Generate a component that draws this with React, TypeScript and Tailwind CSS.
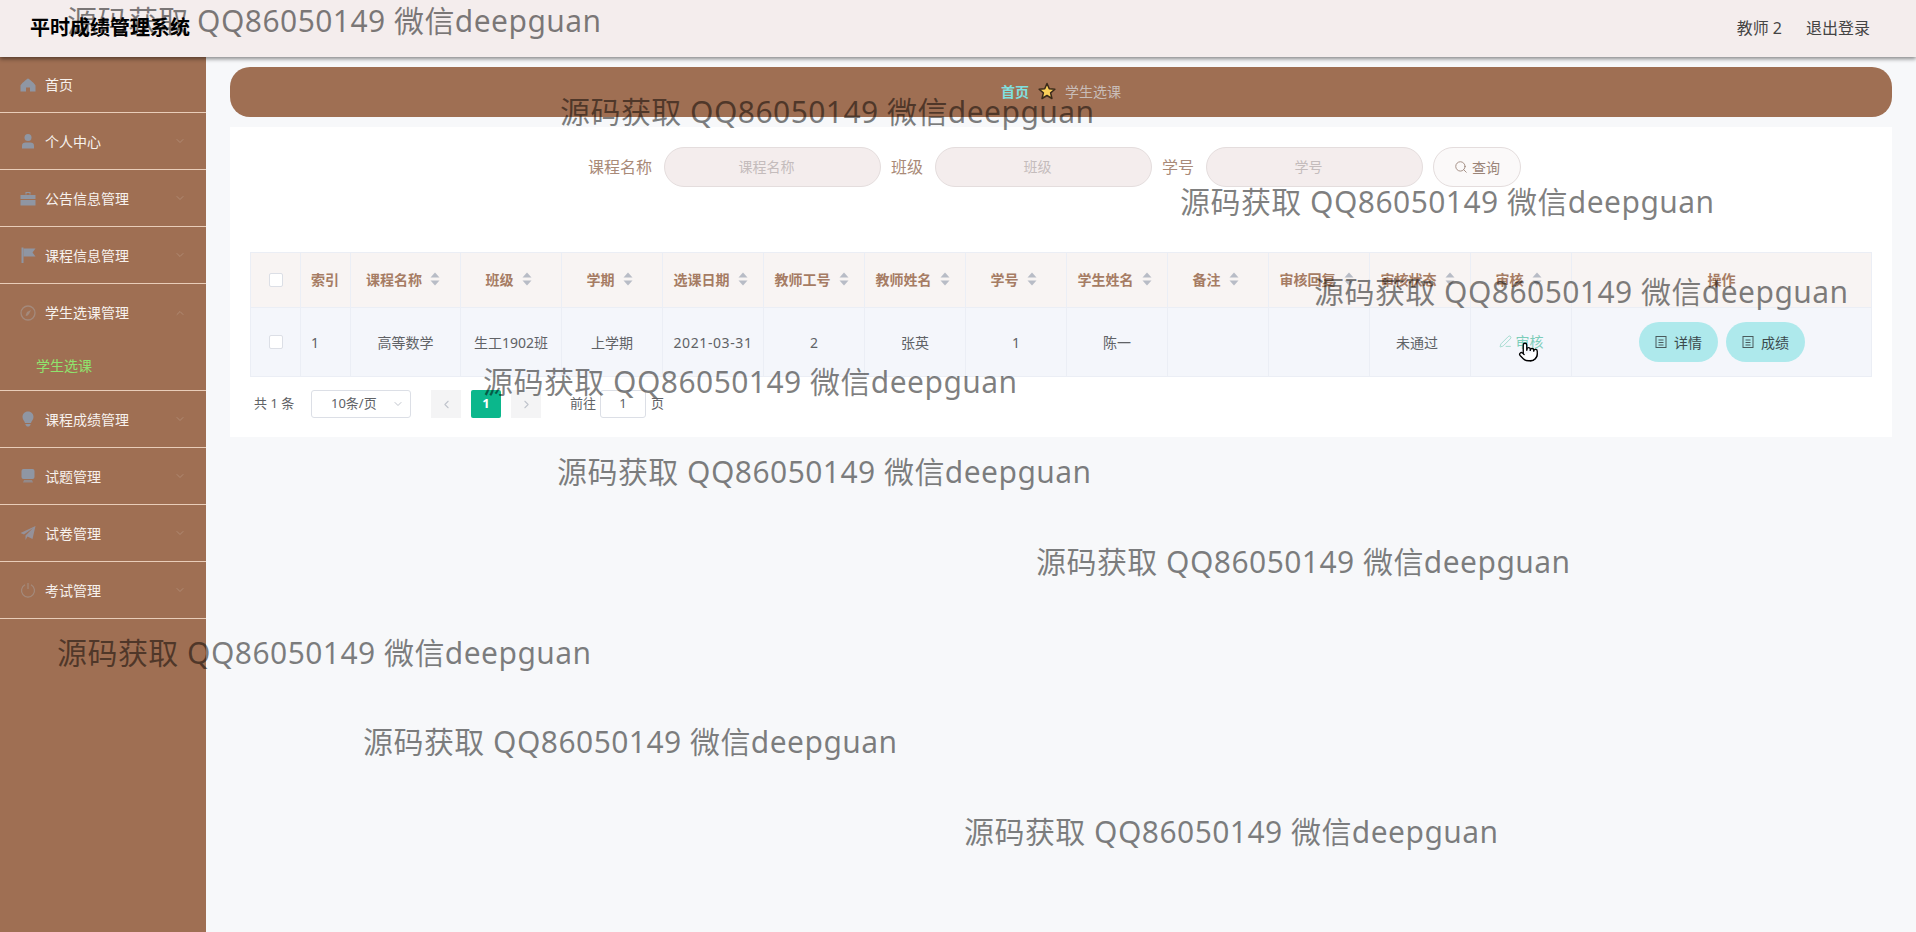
import { ChevronDown, ChevronUp, ChevronLeft, ChevronRight, Search, Pointer, PenLine } from 'lucide-react';
import type { ReactNode } from 'react';

function Glyph({ children, className = 'text-[#8f96a3]' }: { children: ReactNode; className?: string }) {
  return (
    <svg viewBox="0 0 16 16" fill="currentColor" className={`w-[16px] h-[16px] shrink-0 ${className}`}>
      {children}
    </svg>
  );
}

const HomeIcon = () => <Glyph><path d="M8 1.5 C9 1.5 15.5 7.5 15.5 8.5 V14.5 H10 V10.5 H6 V14.5 H0.5 V8.5 C0.5 7.5 7 1.5 8 1.5 Z" /></Glyph>;
const UserIcon = () => <Glyph><circle cx="8" cy="4.5" r="3.5" /><path d="M2 15.5 V12.5 C2 10.5 3.5 9.5 5.5 9.5 H10.5 C12.5 9.5 14 10.5 14 12.5 V15.5 Z" /></Glyph>;
const CaseIcon = () => <Glyph><path d="M5.5 4.5 V2 H10.5 V4.5 H9.5 V3 H6.5 V4.5 Z" /><path d="M0.5 5 H15.5 V9 H0.5 Z" /><path d="M0.5 10 H15.5 V15.5 H0.5 Z" /></Glyph>;
const FlagIcon = () => <Glyph><path d="M1.5 0.5 H3.5 V16 H1.5 Z" /><path d="M3.5 1.5 H15.5 L12.5 5.5 L15.5 9.5 H3.5 Z" /></Glyph>;
const CompassIcon = () => (
  <Glyph className="text-[#a48a7c]">
    <circle cx="8" cy="8" r="7" fill="none" stroke="currentColor" strokeWidth="1.3" />
    <path d="M11 5 L9 9 L7 11 L5.5 10.5 L7 7 Z" />
  </Glyph>
);
const BulbIcon = () => <Glyph><path d="M8 0.5 C11.5 0.5 13.5 3 13.5 6 C13.5 8.5 11.5 10 11 12 H5 C4.5 10 2.5 8.5 2.5 6 C2.5 3 4.5 0.5 8 0.5 Z" /><path d="M5.5 13 H10.5 V14 L9 15.5 H7 L5.5 14 Z" /></Glyph>;
const ScreenIcon = () => <Glyph><rect x="1.5" y="1" width="13" height="10" rx="2" /><path d="M4 12 H12 L13 14.5 H3 Z" opacity="0.7" /></Glyph>;
const PlaneIcon = () => <Glyph className="text-[#959199]"><path d="M15.5 1 L12.5 14 L7.5 11.5 L5.5 15 V10.5 L13 3 L4 9.5 L0.5 8 Z" /></Glyph>;
const PowerIcon = () => (
  <Glyph className="text-[#a48a7c]">
    <path d="M8 1 V7" fill="none" stroke="currentColor" strokeWidth="1.2" />
    <path d="M5 2.8 A6.5 6.5 0 1 0 11 2.8" fill="none" stroke="currentColor" strokeWidth="1.2" />
  </Glyph>
);

const menu = [
  { name: '个人中心', icon: <UserIcon /> },
  { name: '公告信息管理', icon: <CaseIcon /> },
  { name: '课程信息管理', icon: <FlagIcon /> },
];
const menu2 = [
  { name: '课程成绩管理', icon: <BulbIcon /> },
  { name: '试题管理', icon: <ScreenIcon /> },
  { name: '试卷管理', icon: <PlaneIcon /> },
  { name: '考试管理', icon: <PowerIcon /> },
];

const columns = ['课程名称', '班级', '学期', '选课日期', '教师工号', '教师姓名', '学号', '学生姓名', '备注', '审核回复', '审核状态', '审核'];
const row = ['高等数学', '生工1902班', '上学期', '2021-03-31', '2', '张英', '1', '陈一', '', '', '未通过'];

const marks = [
  'left-[67px] top-[1px]',
  'left-[560px] top-[92px]',
  'left-[1180px] top-[182px]',
  'left-[1314px] top-[272px]',
  'left-[483px] top-[362px]',
  'left-[557px] top-[452px]',
  'left-[1036px] top-[542px]',
  'left-[57px] top-[633px]',
  'left-[363px] top-[722px]',
  'left-[964px] top-[812px]',
];

function Sort() {
  return (
    <svg width="10" height="14" viewBox="0 0 10 14" className="ml-[8px] shrink-0">
      <path d="M5 0.5 L9.5 5.5 H0.5 Z" fill="#b8bcc6" />
      <path d="M5 13.5 L9.5 8.5 H0.5 Z" fill="#b8bcc6" />
    </svg>
  );
}

function MenuItem({ name, icon }: { name: string; icon: ReactNode }) {
  return (
    <div className="h-[57px] flex items-center pl-[20px] pr-[20px] border-b border-[#e9cdb9] text-[14px] text-[#f7f2ee]">
      {icon}
      <span className="ml-[9px] flex-1">{name}</span>
      <ChevronDown className="w-[12px] h-[12px] text-[#b08a73]" />
    </div>
  );
}

function Field({ label, width }: { label: string; width: string }) {
  return (
    <>
      <label className={`${width} text-[16px] text-[#a98a78] text-center shrink-0`}>{label}</label>
      <input
        placeholder={label}
        className="w-[217px] h-[40px] ml-[12px] mr-[10px] pr-[12px] pb-[2px] rounded-[20px] bg-[#f4eded] border border-[#e4dddd] text-center text-[14px] placeholder:text-[#c4bcbc] outline-none"
      />
    </>
  );
}

function Action({ text }: { text: string }) {
  return (
    <button className="w-[79px] h-[40px] rounded-[20px] bg-[#aee9ec] text-[14px] text-[#3b4a4c] flex items-center justify-center gap-[6px]">
      <svg viewBox="0 0 14 14" className="w-[14px] h-[14px]" fill="none" stroke="#4a5a5c" strokeWidth="1">
        <rect x="2" y="1.5" width="10" height="11" />
        <path d="M4.5 5 H9.5 M4.5 7.5 H9.5 M4.5 10 H9.5" />
      </svg>
      {text}
    </button>
  );
}

export default function App() {
  return (
    <div className="relative h-[932px] overflow-hidden bg-[#f7f8fa] font-['Noto_Sans','Noto_Sans_CJK_SC',sans-serif]">
      <header className="relative z-10 h-[57px] bg-[#f4eded] flex items-center pl-[30px] pr-[46px] pb-[2px] shadow-[0_2px_4px_rgba(0,0,0,0.45)]">
        <div className="text-[20px] font-bold text-black flex-1">平时成绩管理系统</div>
        <span className="text-[16px] text-[#444]">教师 2</span>
        <span className="text-[16px] text-[#444] ml-[24px]">退出登录</span>
      </header>

      <div className="flex h-[875px]">
        <aside className="w-[206px] shrink-0 bg-[#9f6f53]">
          <div className="h-[56px] flex items-center pl-[20px] border-b border-[#e9cdb9] text-[14px] text-[#f7f2ee]">
            <HomeIcon />
            <span className="ml-[9px]">首页</span>
          </div>
          {menu.map(m => <MenuItem key={m.name} name={m.name} icon={m.icon} />)}
          <div className="h-[107px] border-b border-[#e9cdb9]">
            <div className="h-[57px] flex items-center pl-[20px] pr-[20px] text-[14px] text-[#f7f2ee]">
              <CompassIcon />
              <span className="ml-[9px] flex-1">学生选课管理</span>
              <ChevronUp className="w-[12px] h-[12px] text-[#b08a73]" />
            </div>
            <div className="h-[50px] flex items-center pl-[36px] pb-[2px] text-[14px] text-[#8fe36d]">学生选课</div>
          </div>
          {menu2.map(m => <MenuItem key={m.name} name={m.name} icon={m.icon} />)}
        </aside>

        <main className="flex-1 px-[24px] pt-[10px]">
          <div className="h-[50px] rounded-[20px] bg-[#9f6f53] flex items-center justify-center pb-[2px] text-[14px]">
            <span className="font-bold text-[#7fe0e0]">首页</span>
            <svg width="18" height="18" viewBox="0 0 24 24" className="mx-[9px]">
              <path d="M12 2 L15 9 L22.5 9.6 L16.8 14.5 L18.6 22 L12 18 L5.4 22 L7.2 14.5 L1.5 9.6 L9 9 Z" fill="#fbd05a" stroke="#3a2a1a" strokeWidth="2" strokeLinejoin="round" />
            </svg>
            <span className="text-[#c9bdb8]">学生选课</span>
          </div>

          <section className="mt-[10px] h-[310px] bg-white px-[20px] pt-[20px]">
            <div className="flex items-center justify-center h-[40px] pr-[13px]">
              <Field label="课程名称" width="w-[64px]" />
              <Field label="班级" width="w-[32px]" />
              <Field label="学号" width="w-[32px]" />
              <button className="w-[88px] h-[40px] rounded-[20px] bg-[#fbf9f9] border border-[#e4dddd] flex items-center justify-center gap-[4px] text-[14px] text-[#9a8478]">
                <Search className="w-[14px] h-[14px]" strokeWidth={1.5} />
                查询
              </button>
            </div>

            <table className="mt-[65px] w-[1621px] table-fixed border-collapse text-[14px]">
              <colgroup>
                <col className="w-[50px]" />
                <col className="w-[50px]" />
                <col className="w-[110px]" />
                {columns.slice(1).map(c => <col key={c} className="w-[101px]" />)}
                <col className="w-[300px]" />
              </colgroup>
              <thead>
                <tr className="h-[55px] bg-[#f8f4f3]">
                  <th className="border border-[#ebeef5]">
                    <span className="block w-[14px] h-[14px] mx-auto bg-white border border-[#dcdfe6] rounded-[2px]" />
                  </th>
                  <th className="border border-[#ebeef5] text-left pl-[10px] pb-[2px] font-semibold text-[#a67c64]">索引</th>
                  {columns.map(c => (
                    <th key={c} className="border border-[#ebeef5] pb-[2px] font-semibold text-[#a67c64]">
                      <div className="flex items-center justify-center pr-[5px]">{c}<Sort /></div>
                    </th>
                  ))}
                  <th className="border border-[#ebeef5] pb-[2px] font-semibold text-[#a67c64]">操作</th>
                </tr>
              </thead>
              <tbody>
                <tr className="h-[69px] bg-[#f4f6fb] text-[#606266]">
                  <td className="border border-[#ebeef5]">
                    <span className="block w-[14px] h-[14px] mx-auto bg-white border border-[#dcdfe6] rounded-[2px]" />
                  </td>
                  <td className="border border-[#ebeef5] pl-[10px]">1</td>
                  {row.map((v, i) => (
                    <td key={i} className={`border border-[#ebeef5] text-center ${i === 3 ? 'tracking-[0.6px]' : ''} ${i === 10 ? 'pr-[6px]' : ''}`}>{v}</td>
                  ))}
                  <td className="border border-[#ebeef5] text-center text-[#7ccdb9]">
                    <span className="inline-flex items-center gap-[4px]">
                      <PenLine className="w-[13px] h-[13px]" strokeWidth={1.2} />
                      审核
                    </span>
                  </td>
                  <td className="border border-[#ebeef5]">
                    <div className="flex items-center justify-center gap-[8px]">
                      <Action text="详情" />
                      <Action text="成绩" />
                    </div>
                  </td>
                </tr>
              </tbody>
            </table>

            <div className="mt-[13px] pl-[4px] flex items-center h-[28px] text-[13px] text-[#606266]">
              <span className="w-[57px]">共 1 条</span>
              <div className="w-[100px] h-[28px] border border-[#dcdfe6] rounded-[3px] flex items-center pl-[19px] pr-[6px]">
                <span className="flex-1">10条/页</span>
                <ChevronDown className="w-[12px] h-[12px] text-[#c0c4cc]" />
              </div>
              <button className="w-[30px] h-[28px] ml-[20px] bg-[#f4f4f5] flex items-center justify-center text-[#c0c4cc]">
                <ChevronLeft className="w-[13px] h-[13px]" />
              </button>
              <button className="w-[30px] h-[28px] ml-[10px] bg-[#0bb78c] rounded-[2px] text-white font-bold">1</button>
              <button className="w-[30px] h-[28px] ml-[10px] bg-[#f4f4f5] flex items-center justify-center text-[#c0c4cc]">
                <ChevronRight className="w-[13px] h-[13px]" />
              </button>
              <span className="ml-[29px]">前往</span>
              <div className="w-[46px] h-[28px] ml-[4px] border border-[#dcdfe6] rounded-[3px] flex items-center justify-center">1</div>
              <span className="ml-[5px]">页</span>
            </div>
          </section>
        </main>
      </div>

      <Pointer className="absolute left-[1518px] top-[340px] w-[21px] h-[24px] z-20 text-black fill-white" strokeWidth={1.5} />

      {marks.map(m => (
        <div key={m} className={`absolute ${m} z-30 pointer-events-none whitespace-nowrap text-[30px] leading-[40px] tracking-[0.45px] text-black/50`}>
          源码获取 QQ86050149 微信deepguan
        </div>
      ))}
    </div>
  );
}
